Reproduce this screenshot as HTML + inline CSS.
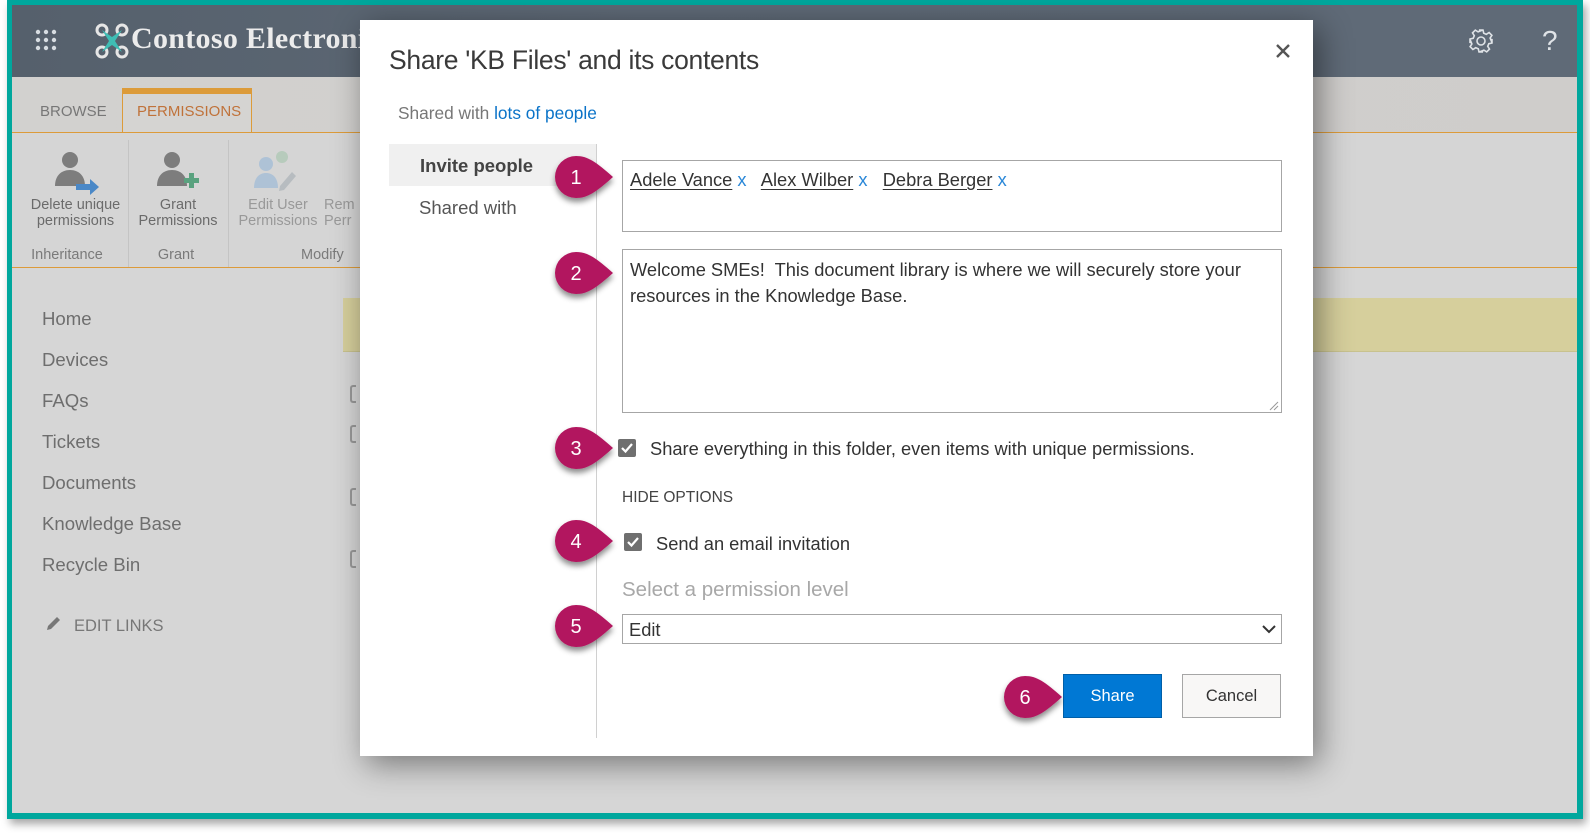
<!DOCTYPE html>
<html><head><meta charset="utf-8"><style>
*{margin:0;padding:0;box-sizing:border-box}
body{width:1590px;height:833px;background:#fff;position:relative;overflow:hidden;font-family:"Liberation Sans",Arial,sans-serif}
.a{position:absolute}
.frame{left:7px;top:0;width:1576px;height:819px;background:#00a79d;box-shadow:3px 5px 8px rgba(0,0,0,.35)}
.inner{left:12px;top:5px;width:1565px;height:808px;background:#d6d6d6;overflow:hidden}
.nav{color:#6e6e6e;font-size:18.6px}
.rib{color:#6b6b6b;font-size:14.5px;text-align:center;line-height:16px}
.lbl{color:#333;font-size:18.3px;white-space:nowrap}
.u{text-decoration:underline;text-underline-offset:3px}
.x{color:#2b88d8;text-decoration:none}
.cb{width:18px;height:18px;background:#6f6f6f;border-radius:2px}
</style></head><body>
<div class="a frame"></div>
<div class="a inner">
 <div class="a" style="left:0;top:0;width:1565px;height:72px;background:linear-gradient(90deg,#55606c,#5e6976 40%,#5f6a77)"></div>
 <svg class="a" style="left:22px;top:23px" width="26" height="26" viewBox="0 0 26 26" fill="#d8dde2">
  <circle cx="4" cy="4" r="2.2"/><circle cx="12" cy="4" r="2.2"/><circle cx="20" cy="4" r="2.2"/>
  <circle cx="4" cy="12" r="2.2"/><circle cx="12" cy="12" r="2.2"/><circle cx="20" cy="12" r="2.2"/>
  <circle cx="4" cy="20" r="2.2"/><circle cx="12" cy="20" r="2.2"/><circle cx="20" cy="20" r="2.2"/></svg>
 <svg class="a" style="left:83px;top:18px" width="34" height="36" viewBox="0 0 34 36">
  <g fill="none" stroke="#e6e6e6" stroke-width="3"><circle cx="7" cy="7" r="5"/><circle cx="27" cy="7" r="5"/><circle cx="7" cy="29" r="5"/><circle cx="27" cy="29" r="5"/></g>
  <path d="M7 7 L17 14 L27 7 L20 18 L27 29 L17 22 L7 29 L14 18Z" fill="#3fbdb4"/></svg>
 <div class="a" style="left:119px;top:17px;color:#ececec;font:bold 30px 'Liberation Serif',serif;letter-spacing:0.3px;white-space:nowrap">Contoso Electronics</div>
 <svg class="a" style="left:1456px;top:23px" width="26" height="26" viewBox="0 0 26 26"><g fill="none" stroke="#dfe3e7" stroke-width="1.6"><circle cx="13" cy="13" r="4"/><path d="M11 2h4l.7 3.2 2.6 1.1 2.8-1.8 2.8 2.8-1.8 2.8 1.1 2.6L24 11v4l-3.2.7-1.1 2.6 1.8 2.8-2.8 2.8-2.8-1.8-2.6 1.1L15 24h-4l-.7-3.2-2.6-1.1-2.8 1.8-2.8-2.8 1.8-2.8-1.1-2.6L2 15v-4l3.2-.7 1.1-2.6-1.8-2.8 2.8-2.8 2.8 1.8 2.6-1.1z"/></g></svg>
 <div class="a" style="left:1530px;top:20px;color:#dfe3e7;font-size:28px">?</div>
 <div class="a" style="left:0;top:72px;width:1565px;height:55px;background:linear-gradient(90deg,#d2d1cf,#cfcdcb)"></div>
 <div class="a" style="left:110px;top:83px;width:130px;height:45px;background:#d5d4d2;border-top:6px solid #dc9b3a;border-left:1px solid #dc9b3a;border-right:1px solid #dc9b3a"></div>
 <div class="a" style="left:0;top:127px;width:1565px;height:1px;background:#dc9b3a"></div>
 <div class="a" style="left:28px;top:98px;color:#777;font-size:15px">BROWSE</div>
 <div class="a" style="left:125px;top:98px;color:#c0723a;font-size:15px">PERMISSIONS</div>
 <div class="a" style="left:0;top:128px;width:1565px;height:134px;background:#d5d5d5"></div>
 <div class="a" style="left:0;top:262px;width:1565px;height:1px;background:#dc9b3a"></div>
 <div class="a" style="left:116px;top:135px;width:1px;height:127px;background:#c4c4c4"></div>
 <div class="a" style="left:216px;top:135px;width:1px;height:127px;background:#c4c4c4"></div>
 <svg class="a" style="left:40px;top:145px" width="50" height="50" viewBox="0 0 50 50"><circle cx="18" cy="10" r="8" fill="#7d7d7d"/><path d="M3 36c0-10 6-16 15-16s15 6 15 16z" fill="#7d7d7d"/><path d="M24 34h14v-5l9 8-9 8v-5H24z" fill="#4a88c7"/></svg>
 <svg class="a" style="left:142px;top:145px" width="50" height="50" viewBox="0 0 50 50"><circle cx="18" cy="10" r="8" fill="#7d7d7d"/><path d="M3 36c0-10 6-16 15-16s15 6 15 16z" fill="#7d7d7d"/><path d="M30 28h5v-5h5v5h5v5h-5v5h-5v-5h-5z" fill="#5aa27f"/></svg>
 <svg class="a" style="left:240px;top:143px" width="50" height="50" viewBox="0 0 50 50" opacity=".55"><circle cx="30" cy="9" r="6" fill="#9fc3a8"/><circle cx="14" cy="16" r="7" fill="#8fb3d8"/><path d="M2 40c0-10 5-15 12-15s12 5 12 15z" fill="#8fb3d8"/><path d="M28 38l12-14 4 4-12 14-5 1z" fill="#a0a8b0"/></svg>
 <div class="a rib" style="left:6px;top:192px;width:115px">Delete unique<br>permissions</div>
 <div class="a rib" style="left:116px;top:192px;width:100px">Grant<br>Permissions</div>
 <div class="a rib" style="left:216px;top:192px;width:100px;color:#999">Edit User<br>Permissions</div>
 <div class="a rib" style="left:312px;top:192px;color:#999;text-align:left">Rem<br>Perr</div>
 <div class="a rib" style="left:0;top:242px;width:110px;color:#7a7a7a">Inheritance</div>
 <div class="a rib" style="left:116px;top:242px;width:96px;color:#7a7a7a">Grant</div>
 <div class="a rib" style="left:289px;top:242px;color:#7a7a7a">Modify</div>
 <div class="a nav" style="left:30px;top:303px">Home</div>
 <div class="a nav" style="left:30px;top:344px">Devices</div>
 <div class="a nav" style="left:30px;top:385px">FAQs</div>
 <div class="a nav" style="left:30px;top:426px">Tickets</div>
 <div class="a nav" style="left:30px;top:467px">Documents</div>
 <div class="a nav" style="left:30px;top:508px">Knowledge Base</div>
 <div class="a nav" style="left:30px;top:549px">Recycle Bin</div>
 <svg class="a" style="left:33px;top:609px" width="18" height="18" viewBox="0 0 18 18"><path d="M2 16l1-4 9-9 3 3-9 9z" fill="#777"/></svg>
 <div class="a" style="left:62px;top:612px;color:#777;font-size:16.5px">EDIT LINKS</div>
 <div class="a" style="left:331px;top:293px;width:1234px;height:54px;background:#d6cf9c;border-bottom:1px solid #c8c28e"></div>
 <div class="a" style="left:338px;top:380px;width:6px;height:18px;border:2px solid #999;border-right:none;border-radius:3px 0 0 3px"></div>
 <div class="a" style="left:338px;top:420px;width:6px;height:18px;border:2px solid #999;border-right:none;border-radius:3px 0 0 3px"></div>
 <div class="a" style="left:338px;top:483px;width:6px;height:18px;border:2px solid #999;border-right:none;border-radius:3px 0 0 3px"></div>
 <div class="a" style="left:338px;top:545px;width:6px;height:18px;border:2px solid #999;border-right:none;border-radius:3px 0 0 3px"></div>
</div>
<div class="a" style="left:360px;top:20px;width:953px;height:736px;background:#fff;box-shadow:6px 8px 30px rgba(0,0,0,.45)"></div>
<div class="a" style="left:389px;top:45px;color:#3a3a3a;font-size:26.5px;letter-spacing:-0.3px;white-space:nowrap">Share 'KB Files' and its contents</div>
<svg class="a" style="left:1275px;top:43px" width="16" height="16" viewBox="0 0 16 16"><path d="M2 2L14 14M14 2L2 14" stroke="#555" stroke-width="2.4"/></svg>
<div class="a" style="left:398px;top:103px;color:#777;font-size:17.3px;white-space:nowrap">Shared with <span style="color:#0a73c8">lots of people</span></div>
<div class="a" style="left:389px;top:144px;width:208px;height:42px;background:#f0f0f0"></div>
<div class="a" style="left:420px;top:155px;color:#444;font-size:18.5px;font-weight:bold">Invite people</div>
<div class="a" style="left:419px;top:197px;color:#555;font-size:18.5px">Shared with</div>
<div class="a" style="left:596px;top:144px;width:1px;height:594px;background:#d0d0d0"></div>
<div class="a" style="left:622px;top:160px;width:660px;height:72px;border:1px solid #a6a6a6"></div>
<div class="a lbl" style="left:630px;top:169px"><span class="u">Adele Vance</span> <span class="x">x</span>&nbsp;&nbsp; <span class="u">Alex Wilber</span> <span class="x">x</span>&nbsp;&nbsp; <span class="u">Debra Berger</span> <span class="x">x</span></div>
<div class="a" style="left:622px;top:249px;width:660px;height:164px;border:1px solid #a6a6a6"></div>
<div class="a lbl" style="left:630px;top:257px;line-height:26px">Welcome SMEs!&nbsp; This document library is where we will securely store your<br>resources in the Knowledge Base.</div>
<svg class="a" style="left:1269px;top:401px" width="10" height="10"><path d="M1 9L9 1M5 9L9 5" stroke="#999"/></svg>
<div class="a cb" style="left:618px;top:439px"></div>
<svg class="a" style="left:618px;top:439px" width="18" height="18"><path d="M4 9l3.5 3.5L14 5" stroke="#fff" stroke-width="2.2" fill="none"/></svg>
<div class="a lbl" style="left:650px;top:438px">Share everything in this folder, even items with unique permissions.</div>
<div class="a" style="left:622px;top:489px;color:#444;font-size:15.5px">HIDE OPTIONS</div>
<div class="a cb" style="left:624px;top:533px"></div>
<svg class="a" style="left:624px;top:533px" width="18" height="18"><path d="M4 9l3.5 3.5L14 5" stroke="#fff" stroke-width="2.2" fill="none"/></svg>
<div class="a lbl" style="left:656px;top:533px">Send an email invitation</div>
<div class="a" style="left:622px;top:578px;color:#a8a8a8;font-size:20.5px">Select a permission level</div>
<div class="a" style="left:622px;top:614px;width:660px;height:30px;border:1px solid #a6a6a6"></div>
<div class="a lbl" style="left:629px;top:619px">Edit</div>
<svg class="a" style="left:1262px;top:624px" width="14" height="10"><path d="M1 2l6 6 6-6" stroke="#333" stroke-width="2" fill="none"/></svg>
<div class="a" style="left:1063px;top:674px;width:99px;height:44px;background:#0078d4;border:1px solid #005fa8;color:#fff;font-size:16.5px;text-align:center;line-height:42px">Share</div>
<div class="a" style="left:1182px;top:674px;width:99px;height:44px;background:#f8f7f6;border:1px solid #a6a6a6;color:#333;font-size:16.5px;text-align:center;line-height:42px">Cancel</div>
<svg width="0" height="0" style="position:absolute"><defs><filter id="sh" x="-30%" y="-30%" width="160%" height="180%"><feDropShadow dx="0" dy="4" stdDeviation="3" flood-color="#000" flood-opacity=".45"/></filter></defs></svg>
<svg class="a" style="left:548px;top:150px" width="72" height="60"><path d="M28 6c12 0 20 6 37 21-17 15-25 21-37 21a21 21 0 0 1 0-42z" fill="#b2195f" filter="url(#sh)"/><text x="28" y="34" fill="#fff" font-size="20" text-anchor="middle" font-family="Liberation Sans">1</text></svg>
<svg class="a" style="left:548px;top:246px" width="72" height="60"><path d="M28 6c12 0 20 6 37 21-17 15-25 21-37 21a21 21 0 0 1 0-42z" fill="#b2195f" filter="url(#sh)"/><text x="28" y="34" fill="#fff" font-size="20" text-anchor="middle" font-family="Liberation Sans">2</text></svg>
<svg class="a" style="left:548px;top:421px" width="72" height="60"><path d="M28 6c12 0 20 6 37 21-17 15-25 21-37 21a21 21 0 0 1 0-42z" fill="#b2195f" filter="url(#sh)"/><text x="28" y="34" fill="#fff" font-size="20" text-anchor="middle" font-family="Liberation Sans">3</text></svg>
<svg class="a" style="left:548px;top:514px" width="72" height="60"><path d="M28 6c12 0 20 6 37 21-17 15-25 21-37 21a21 21 0 0 1 0-42z" fill="#b2195f" filter="url(#sh)"/><text x="28" y="34" fill="#fff" font-size="20" text-anchor="middle" font-family="Liberation Sans">4</text></svg>
<svg class="a" style="left:548px;top:599px" width="72" height="60"><path d="M28 6c12 0 20 6 37 21-17 15-25 21-37 21a21 21 0 0 1 0-42z" fill="#b2195f" filter="url(#sh)"/><text x="28" y="34" fill="#fff" font-size="20" text-anchor="middle" font-family="Liberation Sans">5</text></svg>
<svg class="a" style="left:997px;top:670px" width="72" height="60"><path d="M28 6c12 0 20 6 37 21-17 15-25 21-37 21a21 21 0 0 1 0-42z" fill="#b2195f" filter="url(#sh)"/><text x="28" y="34" fill="#fff" font-size="20" text-anchor="middle" font-family="Liberation Sans">6</text></svg>
</body></html>
